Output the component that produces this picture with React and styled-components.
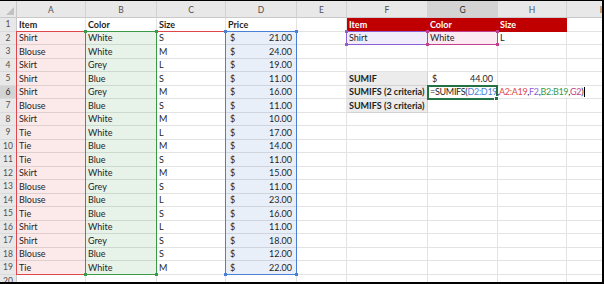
import React from 'react';
import styled, { createGlobalStyle } from 'styled-components';

const GlobalStyle = createGlobalStyle`
  html, body { margin: 0; padding: 0; background: #fff; }
  body { font-family: Lato, "Liberation Sans", sans-serif; }
`;

const COLS = ['A', 'B', 'C', 'D', 'E', 'F', 'G', 'H', 'I'];
const GRID_LINE = 'rgba(0,0,0,0.11)';

const items = [
  ['Shirt', 'White', 'S', '21.00'],
  ['Blouse', 'White', 'M', '24.00'],
  ['Skirt', 'Grey', 'L', '19.00'],
  ['Shirt', 'Blue', 'S', '11.00'],
  ['Shirt', 'Grey', 'M', '16.00'],
  ['Blouse', 'Blue', 'S', '11.00'],
  ['Skirt', 'White', 'M', '10.00'],
  ['Tie', 'White', 'L', '17.00'],
  ['Tie', 'Blue', 'M', '14.00'],
  ['Tie', 'Blue', 'S', '11.00'],
  ['Skirt', 'White', 'M', '15.00'],
  ['Blouse', 'Grey', 'S', '11.00'],
  ['Blouse', 'Blue', 'L', '23.00'],
  ['Tie', 'Blue', 'S', '16.00'],
  ['Shirt', 'White', 'L', '11.00'],
  ['Shirt', 'Grey', 'S', '18.00'],
  ['Blouse', 'Blue', 'S', '12.00'],
  ['Tie', 'White', 'M', '22.00'],
];

const C = {
  red: '#e0474c',
  redFill: '#fce9e9',
  green: '#3a9a48',
  greenFill: '#e7f3e8',
  blue: '#4a7fd6',
  blueFill: '#e9eff9',
  purple: '#8d5fd3',
  purpleFill: '#f0ecf9',
  pink: '#c2418c',
  pinkFill: '#fbeaf1',
  head: '#c00000',
  label: '#ececec',
};

const cells = {};
cells.A1 = { t: 'Item', bold: true };
cells.B1 = { t: 'Color', bold: true };
cells.C1 = { t: 'Size', bold: true, under: C.red };
cells.D1 = { t: 'Price', bold: true };
items.forEach((row, i) => {
  const r = i + 2;
  cells['A' + r] = { t: row[0], bg: C.redFill };
  cells['B' + r] = { t: row[1], bg: C.greenFill };
  cells['C' + r] = { t: row[2] };
  cells['D' + r] = { money: row[3], bg: C.blueFill };
});
cells.F1 = { t: 'Item', bold: true, bg: C.head, color: '#fff', solid: true };
cells.G1 = { t: 'Color', bold: true, bg: C.head, color: '#fff', solid: true };
cells.H1 = { t: 'Size', bold: true, bg: C.head, color: '#fff', solid: true };
cells.F2 = { t: 'Shirt', bg: C.purpleFill };
cells.G2 = { t: 'White', bg: C.pinkFill };
cells.H2 = { t: 'L' };
cells.F5 = { t: 'SUMIF', bold: true, bg: C.label };
cells.G5 = { money: '44.00' };
cells.F6 = { t: 'SUMIFS (2 criteria)', bold: true, bg: C.label };
cells.G6 = { formula: true };
cells.F7 = { t: 'SUMIFS (3 criteria)', bold: true, bg: C.label };

const Frame = styled.div`
  width: 604px;
  height: 284px;
  box-sizing: border-box;
  border-top: 1px solid #000;
  border-right: 2px solid #000;
  border-bottom: 2px solid #000;
  overflow: hidden;
  background: #fff;
`;

const Sheet = styled.div`
  display: grid;
  grid-template-columns: 17px 69px 71px 69px 71px 50px 81px 70px 69px 69px;
  grid-template-rows: 17px repeat(20, 13.5px) 1fr;
  height: 100%;
  font-family: Lato, "Liberation Sans", sans-serif;
  font-size: 9px;
  color: #1f1f1f;
`;

const Corner = styled.div`
  grid-row: 1;
  grid-column: 1;
  background: #e8e8e8;
  border-right: 1px solid #c9c9c9;
  border-bottom: 1px solid #c9c9c9;
  position: relative;
  &::after {
    content: '';
    position: absolute;
    right: 2px;
    bottom: 2px;
    border-style: solid;
    border-width: 0 0 8px 8px;
    border-color: transparent transparent #c2c2c2 transparent;
  }
`;

const ColHead = styled.div`
  grid-row: 1;
  grid-column: ${(p) => p.$c};
  background: ${(p) => (p.$active ? '#d3d3d3' : '#e8e8e8')};
  border-right: 1px solid #d2d2d2;
  border-bottom: 1px solid #c9c9c9;
  display: flex;
  align-items: flex-end;
  justify-content: center;
  padding-bottom: 2px;
  box-sizing: border-box;
  font-size: 8.5px;
  color: ${(p) => (p.$active ? '#2b2b2b' : '#505050')};
`;

const RowHead = styled.div`
  grid-row: ${(p) => p.$r};
  grid-column: 1;
  background: ${(p) => (p.$active ? '#d3d3d3' : '#e8e8e8')};
  border-right: 1px solid #c9c9c9;
  border-bottom: 1px solid #dadada;
  display: flex;
  align-items: center;
  justify-content: center;
  font-size: 8.5px;
  color: ${(p) => (p.$active ? '#2b2b2b' : '#505050')};
  overflow: hidden;
`;

const Cell = styled.div`
  grid-row: ${(p) => p.$r};
  grid-column: ${(p) => p.$c};
  background: ${(p) => p.$bg || '#fff'};
  border-right: 1px solid ${(p) => (p.$solid ? p.$bg : GRID_LINE)};
  border-bottom: 1px solid ${(p) => p.$under || (p.$solid ? p.$bg : GRID_LINE)};
  display: flex;
  align-items: center;
  justify-content: ${(p) => (p.$money ? 'space-between' : 'flex-start')};
  padding: ${(p) => (p.$money ? '0 4px 0 4px' : '0 2px')};
  font-weight: ${(p) => (p.$bold ? 700 : 400)};
  color: ${(p) => p.$color || '#1f1f1f'};
  white-space: nowrap;
  overflow: ${(p) => (p.$overflow ? 'visible' : 'hidden')};
  position: relative;
  z-index: ${(p) => (p.$overflow ? 3 : 'auto')};
  min-width: 0;
`;

const FormulaText = styled.span`
  display: inline-flex;
  align-items: center;
  background: #fff;
  padding-right: 1px;
  letter-spacing: -0.3px;
`;

const Ref = styled.span`
  color: ${(p) => p.$color};
`;

const Caret = styled.span`
  display: inline-block;
  width: 0;
  height: 10px;
  border-left: 1px solid #000;
  margin-left: 1px;
`;

const Range = styled.div`
  grid-row: ${(p) => p.$rows};
  grid-column: ${(p) => p.$c};
  margin: -1px 0 0 -1px;
  border: 1px solid ${(p) => p.$color};
  position: relative;
  pointer-events: none;
  z-index: 2;
`;

const Handle = styled.span`
  position: absolute;
  width: 3px;
  height: 3px;
  background: ${(p) => p.$color};
  ${(p) => (p.$v === 'top' ? 'top: -2px;' : 'bottom: -2px;')}
  ${(p) => (p.$h === 'left' ? 'left: -2px;' : 'right: -2px;')}
`;

const Active = styled.div`
  grid-row: 7;
  grid-column: 8;
  margin: -1px 0 -1px -1px;
  border: 2px solid #217346;
  position: relative;
  pointer-events: none;
  z-index: 4;
`;

const FillHandle = styled.span`
  position: absolute;
  right: -3px;
  bottom: -3px;
  width: 3px;
  height: 3px;
  background: #217346;
  border: 1px solid #fff;
`;

const corners = [
  ['top', 'left'],
  ['top', 'right'],
  ['bottom', 'left'],
  ['bottom', 'right'],
];

function RangeBox({ rows, c, color, handles }) {
  return (
    <Range $rows={rows} $c={c} $color={color}>
      {handles &&
        corners.map(([v, h]) => <Handle key={v + h} $v={v} $h={h} $color={color} />)}
    </Range>
  );
}

function Formula() {
  return (
    <FormulaText>
      =SUMIFS(
      <Ref $color={C.blue}>D2:D19</Ref>,<Ref $color={C.red}>A2:A19</Ref>,
      <Ref $color={C.purple}>F2</Ref>,<Ref $color={C.green}>B2:B19</Ref>,
      <Ref $color={C.pink}>G2</Ref>)
      <Caret />
    </FormulaText>
  );
}

export default function App() {
  const rows = Array.from({ length: 20 }, (_, i) => i + 1);
  return (
    <>
      <GlobalStyle />
      <Frame>
        <Sheet>
          <Corner />
          {COLS.map((col, i) => (
            <ColHead key={col} $c={i + 2} $active={col === 'G'}>
              {col}
            </ColHead>
          ))}
          {rows.map((r) => (
            <React.Fragment key={r}>
              <RowHead $r={r + 1} $active={r === 6}>
                {r}
              </RowHead>
              {COLS.map((col, i) => {
                const d = cells[col + r] || {};
                return (
                  <Cell
                    key={col}
                    $r={r + 1}
                    $c={i + 2}
                    $bg={d.bg}
                    $bold={d.bold}
                    $color={d.color}
                    $solid={d.solid}
                    $under={d.under}
                    $money={!!d.money}
                    $overflow={d.formula}
                  >
                    {d.money ? (
                      <>
                        <span>$</span>
                        <span>{d.money}</span>
                      </>
                    ) : d.formula ? (
                      <Formula />
                    ) : (
                      d.t
                    )}
                  </Cell>
                );
              })}
            </React.Fragment>
          ))}
          <RangeBox rows="3 / 21" c={2} color={C.red} />
          <RangeBox rows="3 / 21" c={3} color={C.green} handles />
          <RangeBox rows="3 / 21" c={5} color={C.blue} handles />
          <RangeBox rows="3" c={7} color={C.purple} handles />
          <RangeBox rows="3" c={8} color={C.pink} handles />
          <Active>
            <FillHandle />
          </Active>
        </Sheet>
      </Frame>
    </>
  );
}
